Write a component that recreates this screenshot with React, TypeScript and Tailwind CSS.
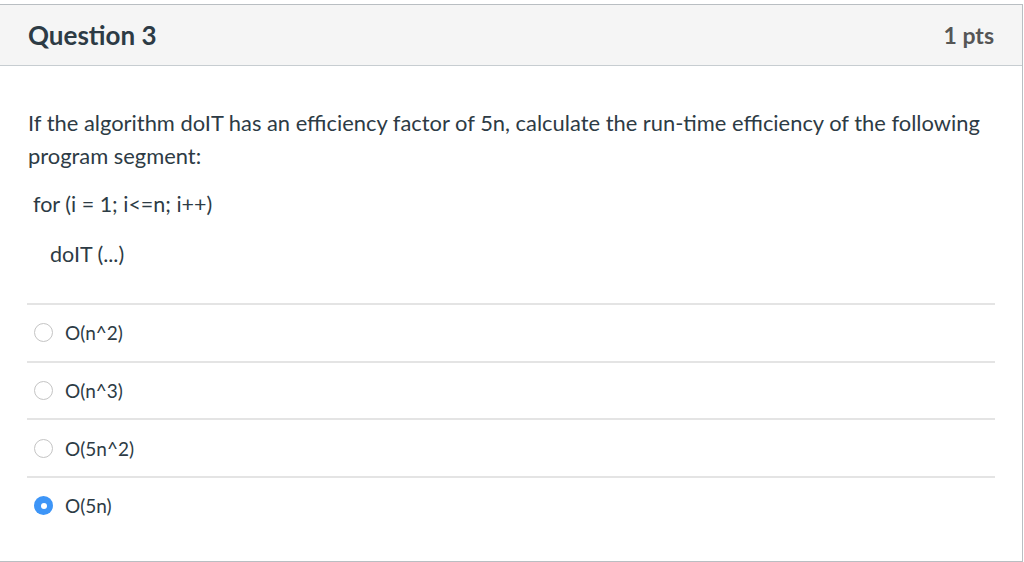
const options = [
  { label: 'O(n^2)', selected: false },
  { label: 'O(n^3)', selected: false },
  { label: 'O(5n^2)', selected: false },
  { label: 'O(5n)', selected: true },
]

function Radio({ checked }: { checked: boolean }) {
  if (checked) {
    return (
      <span className="w-[19px] h-[19px] rounded-full bg-[#3d95f7] flex items-center justify-center flex-shrink-0">
        <span className="w-[6px] h-[6px] rounded-full bg-white" />
      </span>
    )
  }
  return <span className="w-[19px] h-[19px] rounded-full border border-[#c4c4c4] bg-white flex-shrink-0" />
}

export default function App() {
  return (
    <div className="w-[1024px] h-[562px] bg-white pt-[4px] font-['Lato','Noto_Sans',sans-serif] text-[#2d3b45]">
      <div className="w-[1023px] h-[558px] border-t border-r border-b border-[#b9bec2] flex flex-col">
        {/* Header */}
        <div className="h-[61px] bg-[#f5f5f5] border-b border-[#c7cdd1] flex items-center justify-between pl-[28px] pr-[28px]">
          <h2 className="text-[26px] font-bold leading-none">Question 3</h2>
          <span className="text-[23px] font-bold text-[#565656] leading-none">1 pts</span>
        </div>

        {/* Body */}
        <div className="px-[27px] pt-[40px]">
          <p className="text-[21.9px] leading-[33px] pl-[1px]">
            If the algorithm doIT has an efficiency factor of 5n, calculate the run-time efficiency of the following program segment:
          </p>
          <p className="text-[21.5px] leading-[33px] pl-[6px] mt-[16px]">for (i = 1; i&lt;=n; i++)</p>
          <p className="text-[21.5px] leading-[33px] pl-[23px] mt-[17px]">doIT (...)</p>

          <div className="mt-[32px] w-[968px]">
            {options.map((o) => (
              <div
                key={o.label}
                className="h-[57.7px] flex items-center gap-[12px] pl-[7px] border-t-2 border-[#e4e4e4]"
              >
                <Radio checked={o.selected} />
                <span className="text-[19px] leading-none">{o.label}</span>
              </div>
            ))}
          </div>
        </div>
      </div>
    </div>
  )
}
